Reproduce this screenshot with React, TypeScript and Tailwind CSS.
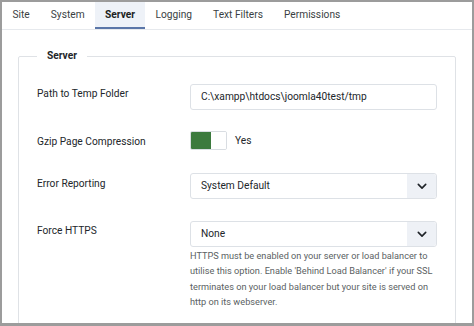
import React from "react";

const Chevron = () => (
  <svg width="10" height="7" viewBox="0 0 10 7" fill="none">
    <path d="M1.3 1.4 L5 5.1 L8.7 1.4" stroke="#1f2328" strokeWidth="1.6" strokeLinecap="round" strokeLinejoin="round" />
  </svg>
);

const Select = ({ value }: { value: string }) => (
  <div className="flex h-[26px] w-[247px] items-stretch rounded-[3px] border border-[#dde1e6] bg-white">
    <div className="flex flex-1 items-center pl-[10px] text-[10.2px] text-[#22262a]">{value}</div>
    <div className="flex w-[29px] items-center justify-center rounded-r-[3px] bg-[#eef1f6]">
      <Chevron />
    </div>
  </div>
);

const tabs = ["Site", "System", "Server", "Logging", "Text Filters", "Permissions"];

export default function App() {
  return (
    <div className="h-[326px] w-[474px] overflow-hidden border-x-2 border-t-2 border-b-[3px] border-[#9c9c9c] bg-white font-['Roboto','Liberation_Sans',sans-serif] text-[#22262a]">
      <div className="flex h-[28px] border-b border-[#e6e9ed]">
        {tabs.map((t) =>
          t === "Server" ? (
            <div
              key={t}
              className="flex items-center border-b-2 border-[#5a76a8] bg-[#eef2f8] px-[10px] pt-[1px] text-[10.2px] font-bold text-[#1c1f23]"
            >
              {t}
            </div>
          ) : (
            <div key={t} className="flex items-center px-[10.5px] pb-[1px] text-[10.2px] text-[#3a3f44]">
              {t}
            </div>
          )
        )}
      </div>
      <fieldset className="mx-[16px] mt-[18px] h-[300px] rounded-[2px] border border-[#dfe2e6] pl-[18px] pr-[18px]">
        <legend className="px-[10px] text-[10.2px] font-bold leading-[16px] text-[#22262a]">Server</legend>
        <div className="mt-[20px] flex">
          <div className="w-[153px] pt-[2px] text-[10.2px] leading-[16px]">Path to Temp Folder</div>
          <div className="flex h-[26px] w-[247px] items-center rounded-[3px] border border-[#dde1e6] pl-[10px] text-[10.2px]">
            C:\xampp\htdocs\joomla40test/tmp
          </div>
        </div>
        <div className="mt-[21px] flex">
          <div className="w-[153px] pt-[3px] text-[10.2px] leading-[16px]">Gzip Page Compression</div>
          <div className="flex items-center gap-[8px]">
            <div className="flex h-[19px] w-[37px] overflow-hidden rounded-[2px] border border-[#d9dde2]">
              <div className="w-[20px] bg-[#3c7a3e]" />
              <div className="flex-1 bg-white" />
            </div>
            <span className="text-[10.2px]">Yes</span>
          </div>
        </div>
        <div className="mt-[23px] flex">
          <div className="w-[153px] pt-[3px] text-[10.2px] leading-[16px]">Error Reporting</div>
          <Select value="System Default" />
        </div>
        <div className="mt-[22px] flex">
          <div className="w-[153px] pt-[2px] text-[10.2px] leading-[16px]">Force HTTPS</div>
          <div>
            <Select value="None" />
            <p className="mt-[1px] w-[247px] text-[9.2px] leading-[15.3px] text-[#5b5f63]">
              HTTPS must be enabled on your server or load balancer to utilise this option. Enable 'Behind Load Balancer' if your SSL terminates on your load balancer but your site is served on http on its webserver.
            </p>
          </div>
        </div>
      </fieldset>
    </div>
  );
}
